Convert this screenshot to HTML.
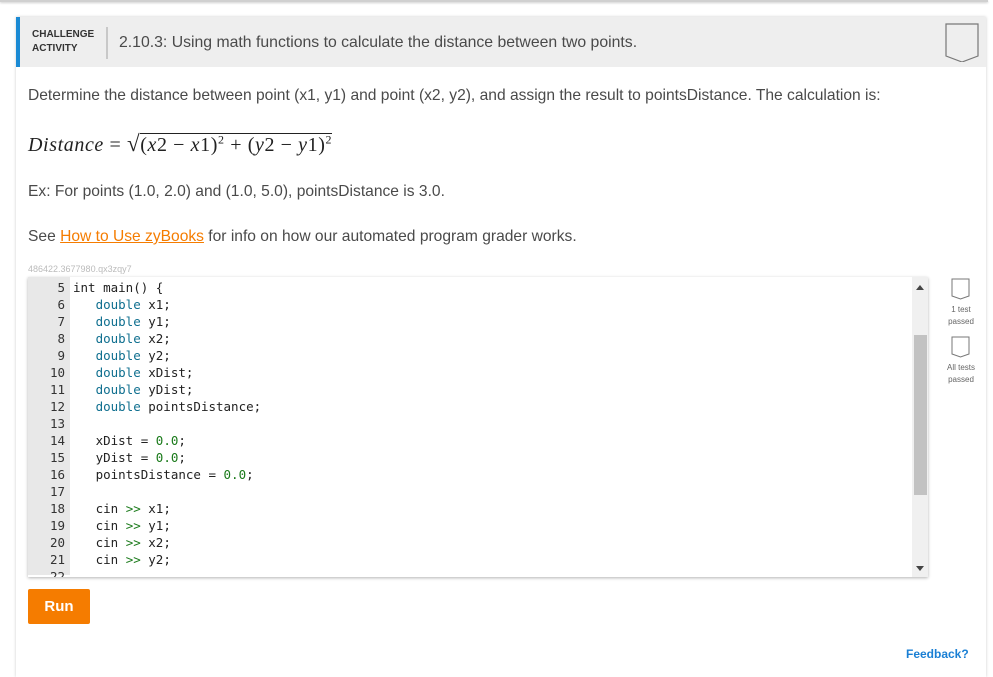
<!DOCTYPE html>
<html><head><meta charset="utf-8"><style>
body{margin:0;width:993px;height:659px;overflow:hidden;background:#fff;font-family:"Liberation Sans",sans-serif;position:relative}
.topbar{position:absolute;left:0;top:0;width:988px;height:2px;background:#d0d0d0;box-shadow:0 1px 2px #ccc}
.card{position:absolute;left:16px;top:17px;width:970px;height:660px;background:#fff;box-shadow:0 0 3px rgba(0,0,0,.2)}
.hdr{position:absolute;left:0;top:0;width:970px;height:50px;background:#eee;border-left:4px solid #1a8ad4;box-sizing:border-box}
.lbl{position:absolute;left:12px;top:11px;font-size:10px;font-weight:bold;color:#333;line-height:14px}
.sep{position:absolute;left:86px;top:10px;width:2px;height:32px;background:#c8c8c8}
.title{position:absolute;left:99px;top:17px;font-size:15.8px;color:#4a4a4a}
.p{position:absolute;left:12px;font-size:15.6px;color:#4a4a4a;white-space:nowrap}
.math{font-family:"Liberation Serif",serif;font-size:20px;color:#222;letter-spacing:0.6px}
a{color:#f57c00;text-decoration:underline}
.id{position:absolute;left:12px;top:247px;font-size:9px;color:#bbb}
.ed{position:absolute;left:12px;top:260px;width:900px;height:300px;background:#fff;box-shadow:0 1px 3px rgba(0,0,0,.3);overflow:hidden}
.gut{position:absolute;left:0;top:0;width:42px;height:298px;background:#e8e8e8}
pre{margin:0;position:absolute;left:0;top:2px;font-family:"DejaVu Sans Mono","Liberation Mono",monospace;font-size:12.5px;line-height:17px;color:#222}
.n{display:inline-block;width:37px;text-align:right;color:#333;margin-right:8px}
.k{color:#0f6f8f}.g{color:#1a7a1a}
.sb{position:absolute;right:0;top:0;width:16px;height:300px;background:#f0f0f0}
.th{position:absolute;left:2px;top:58px;width:13px;height:160px;background:#c2c2c2}
.run{position:absolute;left:12px;top:572px;width:62px;height:35px;background:#f57c00;color:#fff;font-weight:bold;font-size:15px;text-align:center;line-height:35px;border-radius:2px}
.fb{position:absolute;left:890px;top:630px;color:#1a7fd4;font-weight:bold;font-size:12px}
.tp{position:absolute;font-size:8px;color:#666;text-align:center;width:40px;line-height:12px}
</style></head><body>
<div class="topbar"></div>
<div class="card">
<div class="hdr"><div class="lbl">CHALLENGE<br>ACTIVITY</div><div class="sep"></div>
<div class="title">2.10.3: Using math functions to calculate the distance between two points.</div>
<svg style="position:absolute;left:924px;top:5px" width="36" height="40"><path d="M2 2H34V34L18 40L2 34Z" fill="none" stroke="#777" stroke-width="1.2"/></svg></div>
<div class="p" style="top:70px">Determine the distance between point (x1, y1) and point (x2, y2), and assign the result to pointsDistance. The calculation is:</div>
<div class="p math" style="top:114px"><i>Distance</i> = <span style="font-size:23px">√</span><span style="border-top:1px solid #222">(<i>x</i>2 − <i>x</i>1)<sup style="font-size:12px">2</sup> + (<i>y</i>2 − <i>y</i>1)<sup style="font-size:12px">2</sup></span></div>
<div class="p" style="top:166px">Ex: For points (1.0, 2.0) and (1.0, 5.0), pointsDistance is 3.0.</div>
<div class="p" style="top:211px">See <a>How to Use zyBooks</a> for info on how our automated program grader works.</div>
<div class="id">486422.3677980.qx3zqy7</div>
<div class="ed"><div class="gut"></div>
<pre><span class="n">5</span>int main() {
<span class="n">6</span>   <span class="k">double</span> x1;
<span class="n">7</span>   <span class="k">double</span> y1;
<span class="n">8</span>   <span class="k">double</span> x2;
<span class="n">9</span>   <span class="k">double</span> y2;
<span class="n">10</span>   <span class="k">double</span> xDist;
<span class="n">11</span>   <span class="k">double</span> yDist;
<span class="n">12</span>   <span class="k">double</span> pointsDistance;
<span class="n">13</span>
<span class="n">14</span>   xDist = <span class="g">0.0</span>;
<span class="n">15</span>   yDist = <span class="g">0.0</span>;
<span class="n">16</span>   pointsDistance = <span class="g">0.0</span>;
<span class="n">17</span>
<span class="n">18</span>   cin <span class="g">&gt;&gt;</span> x1;
<span class="n">19</span>   cin <span class="g">&gt;&gt;</span> y1;
<span class="n">20</span>   cin <span class="g">&gt;&gt;</span> x2;
<span class="n">21</span>   cin <span class="g">&gt;&gt;</span> y2;
<span class="n">22</span></pre>
<div class="sb"><div style="position:absolute;left:4px;top:8px;border:4px solid transparent;border-bottom:5px solid #444;border-top:0"></div><div class="th"></div><div style="position:absolute;left:4px;top:289px;border:4px solid transparent;border-top:5px solid #444;border-bottom:0"></div></div>
</div>
<svg style="position:absolute;left:935px;top:261px" width="20" height="22"><path d="M1 1H18V18L9.5 21L1 18Z" fill="none" stroke="#777"/></svg>
<div class="tp" style="left:925px;top:287px">1 test<br>passed</div>
<svg style="position:absolute;left:935px;top:319px" width="20" height="22"><path d="M1 1H18V18L9.5 21L1 18Z" fill="none" stroke="#777"/></svg>
<div class="tp" style="left:925px;top:345px">All tests<br>passed</div>
<div class="run">Run</div>
<div class="fb">Feedback?</div>
</div>
</body></html>
